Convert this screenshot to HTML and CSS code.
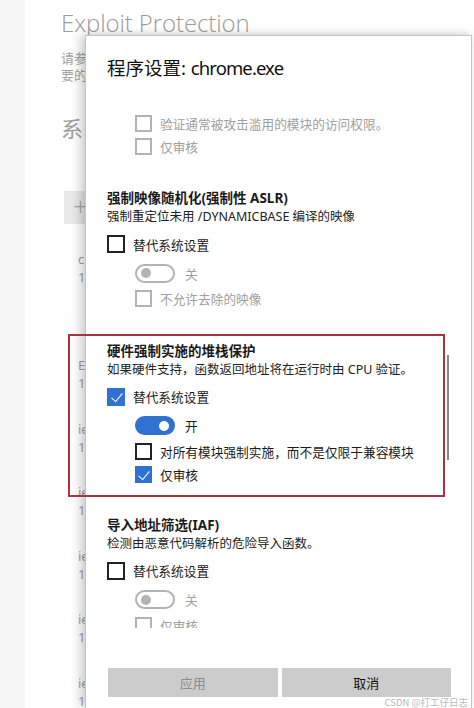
FILE: index.html
```html
<!DOCTYPE html>
<html lang="zh">
<head>
<meta charset="utf-8">
<title>Exploit Protection</title>
<link rel="stylesheet" href="styles.css">
</head>
<body>
<div class="page">
  <div class="rail"></div>
  <main class="bg">
    <h1 class="bg-title">Exploit Protection</h1>
    <p class="bg-desc">请参<br>要的</p>
    <h2 class="bg-sub">系</h2>
    <div class="bg-add">+</div>
    <ul class="bg-list">
      <li class="bg-item first"><span>c</span><span>1</span></li>
      <li class="bg-item"><span>E</span><span>1</span></li>
      <li class="bg-item"><span>ie</span><span>1</span></li>
      <li class="bg-item"><span>ie</span><span>1</span></li>
      <li class="bg-item"><span>ie</span><span>1</span></li>
      <li class="bg-item"><span>ie</span><span>1</span></li>
      <li class="bg-item"><span>ie</span><span>1</span></li>
    </ul>
  </main>

  <section class="dialog">
    <header class="dlg-head">程序设置: <span class="lat">chrome.exe</span></header>
    <div class="dlg-body">
      <div class="sect first">
        <div class="row sub dis"><span class="cb"></span><span>验证通常被攻击滥用的模块的访问权限。</span></div>
        <div class="row sub dis gap6"><span class="cb"></span><span>仅审核</span></div>
      </div>

      <div class="sect">
        <div class="h">强制映像随机化(强制性 ASLR)</div>
        <div class="desc">强制重定位未用 /DYNAMICBASE 编译的映像</div>
        <div class="row main"><span class="cb"></span><span>替代系统设置</span></div>
        <div class="row tog dis"><span class="sw"></span><span>关</span></div>
        <div class="row sub dis gap8"><span class="cb"></span><span>不允许去除的映像</span></div>
      </div>

      <div class="sect">
        <div class="h">硬件强制实施的堆栈保护</div>
        <div class="desc">如果硬件支持，函数返回地址将在运行时由 CPU 验证。</div>
        <div class="row main"><span class="cb on"></span><span>替代系统设置</span></div>
        <div class="row tog"><span class="sw on"></span><span>开</span></div>
        <div class="row sub gap8"><span class="cb"></span><span>对所有模块强制实施，而不是仅限于兼容模块</span></div>
        <div class="row sub gap6"><span class="cb on"></span><span>仅审核</span></div>
      </div>

      <div class="sect last">
        <div class="h">导入地址筛选(IAF)</div>
        <div class="desc">检测由恶意代码解析的危险导入函数。</div>
        <div class="row main"><span class="cb"></span><span>替代系统设置</span></div>
        <div class="row tog dis"><span class="sw"></span><span>关</span></div>
        <div class="row sub dis gap8"><span class="cb"></span><span>仅审核</span></div>
      </div>
    </div>
    <div class="scrollbar"></div>
    <footer class="dlg-foot">
      <button class="btn dis-btn">应用</button>
      <button class="btn">取消</button>
    </footer>
  </section>

  <div class="annot"></div>
  <div class="mark">CSDN @打工仔日志</div>
</div>
</body>
</html>
```
FILE: styles.css
```css
* { box-sizing: border-box; }
html, body { margin: 0; padding: 0; background: #fff; }
body {
  font-family: "Noto Sans", "Noto Sans CJK SC", sans-serif;
  color: #1a1a1a;
}
.page {
  position: relative;
  width: 474px;
  height: 708px;
  overflow: hidden;
  display: grid;
  grid-template-columns: 25px 1fr;
}
.rail { background: #f6f6f6; }
.bg {
  padding-left: 36px;
  color: #a0a0a0;
}
.bg-title {
  margin: 8px 0 0;
  font-family: "Open Sans", "Noto Sans CJK SC", sans-serif;
  font-weight: 300;
  font-size: 24px;
  line-height: 30px;
  height: 30px;
  color: #9c9c9c;
  white-space: nowrap;
  letter-spacing: -0.1px;
}
.bg-desc {
  margin: 11.5px 0 0;
  font-size: 13px;
  line-height: 17px;
  white-space: nowrap;
}
.bg-sub {
  margin: 31.5px 0 0;
  font-weight: 400;
  font-size: 22px;
  line-height: 26px;
  white-space: nowrap;
}
.bg-add {
  margin: 50px 0 0 3px;
  width: 40px;
  height: 33px;
  background: #e8e8e8;
  color: #a8a8a8;
  font-size: 26px;
  font-weight: 300;
  line-height: 31px;
  padding-left: 9px;
}
.bg-list {
  list-style: none;
  margin: 26px 0 0;
  padding: 0 0 0 17px;
}
.bg-item {
  display: flex;
  flex-direction: column;
  height: 63.5px;
  font-size: 13px;
  line-height: 18px;
  white-space: nowrap;
}
.bg-item.first { height: 106px; }

/* dialog */
.dialog {
  position: absolute;
  left: 85px;
  top: 35px;
  width: 387px;
  bottom: 0;
  background: #fff;
  border: 1px solid #c4c4c4;
  border-bottom: 0;
  box-shadow: -5px 0 10px rgba(0,0,0,0.18), 0 -2px 6px rgba(0,0,0,0.06);
  display: flex;
  flex-direction: column;
}
.dlg-head {
  height: 60px;
  padding: 19px 0 0 21px;
  font-size: 18.5px;
  line-height: 26px;
  color: #111;
  white-space: nowrap;
}
.dlg-head .lat { letter-spacing: -0.9px; }
.dlg-body {
  height: 532px;
  flex: none;
  overflow: hidden;
  padding: 18.5px 0 0 21px;
}
.sect { margin-top: 34.5px; }
.sect.first { margin-top: 0; }
.sect.last { margin-top: 33px; }
.h {
  height: 19px;
  line-height: 19px;
  font-size: 13.5px;
  font-weight: 700;
  white-space: nowrap;
}
.desc {
  height: 18px;
  line-height: 18px;
  font-size: 12.5px;
  white-space: nowrap;
  color: #222;
}
.row {
  display: flex;
  align-items: center;
  font-size: 12.7px;
  white-space: nowrap;
  color: #1a1a1a;
}
.row.dis { color: #a0a0a0; }
.row.main { margin-top: 9px; height: 18px; gap: 8px; }
.row.tog { margin-top: 11px; height: 18px; gap: 10px; padding-left: 28px; }
.row.sub { height: 17px; gap: 8px; padding-left: 28px; }
.row.sub.gap8 { margin-top: 8px; }
.row.sub.gap6 { margin-top: 6px; }

.cb {
  flex: none;
  position: relative;
  width: 17px;
  height: 17px;
  border: 2px solid #222;
  background: #fff;
}
.row.main .cb { width: 18px; height: 18px; }
.row.dis .cb { border-color: #b3b3b3; }
.cb.on {
  background: #2f72d3;
  border-color: #2f72d3;
}
.cb.on::after {
  content: "";
  position: absolute;
  left: 2px;
  top: 0px;
  width: 5px;
  height: 10px;
  border: solid #fff;
  border-width: 0 1.6px 1.6px 0;
  transform: translate(2px, 0.5px) rotate(40deg);
}
.row.main .cb.on::after { left: 3px; top: 0.5px; }

.sw {
  flex: none;
  position: relative;
  width: 40px;
  height: 19px;
  border: 2px solid #b3b3b3;
  border-radius: 10px;
}
.sw::after {
  content: "";
  position: absolute;
  left: 4px;
  top: 2.5px;
  width: 10px;
  height: 10px;
  border-radius: 50%;
  background: #b3b3b3;
}
.sw.on {
  background: #2f72d3;
  border-color: #2f72d3;
}
.sw.on::after {
  left: auto;
  right: 4px;
  background: #fff;
}

.scrollbar {
  position: absolute;
  right: 22px;
  top: 319px;
  width: 2px;
  height: 105px;
  background: #8a8a8a;
}

.dlg-foot {
  flex: 1;
  display: flex;
  gap: 4px;
  padding: 40px 20px 0 22px;
}
.btn {
  flex: 1;
  height: 29px;
  border: 0;
  background: #cccccc;
  font-family: "Noto Sans CJK SC", sans-serif;
  font-size: 13px;
  color: #111;
  padding: 0;
}
.btn.dis-btn { color: #8e8e8e; }

.annot {
  position: absolute;
  left: 68px;
  top: 334px;
  width: 377px;
  height: 163px;
  border: 2px solid #a8343f;
}
.mark {
  position: absolute;
  right: 6px;
  bottom: 0px;
  font-size: 9.5px;
  line-height: 12px;
  color: #b8b8b8;
  white-space: nowrap;
  font-family: "Noto Sans CJK SC", sans-serif;
}
```
